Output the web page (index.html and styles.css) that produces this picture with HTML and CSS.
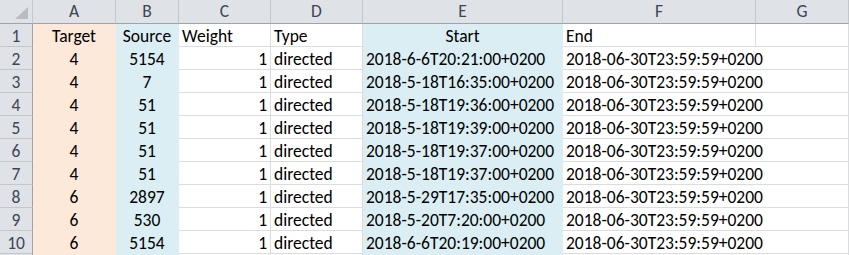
FILE: index.html
```html
<!DOCTYPE html>
<html>
<head>
<meta charset="utf-8">
<link rel="stylesheet" href="styles.css">
</head>
<body>
<div class="sheet">
  <div class="hd corner"><span class="tri"></span></div>
  <div class="hd">A</div>
  <div class="hd">B</div>
  <div class="hd">C</div>
  <div class="hd">D</div>
  <div class="hd">E</div>
  <div class="hd">F</div>
  <div class="hd">G</div>

  <div class="rn">1</div><div class="c a ctr">Target</div><div class="c b ctr">Source</div><div class="c">Weight</div><div class="c">Type</div><div class="c e ctr">Start</div><div class="c">End</div><div class="c"></div>
  <div class="rn">2</div><div class="c a ctr">4</div><div class="c b ctr">5154</div><div class="c rt">1</div><div class="c">directed</div><div class="c e">2018-6-6T20:21:00+0200</div><div class="c ov">2018-06-30T23:59:59+0200</div><div class="c"></div>
  <div class="rn">3</div><div class="c a ctr">4</div><div class="c b ctr">7</div><div class="c rt">1</div><div class="c">directed</div><div class="c e">2018-5-18T16:35:00+0200</div><div class="c ov">2018-06-30T23:59:59+0200</div><div class="c"></div>
  <div class="rn">4</div><div class="c a ctr">4</div><div class="c b ctr">51</div><div class="c rt">1</div><div class="c">directed</div><div class="c e">2018-5-18T19:36:00+0200</div><div class="c ov">2018-06-30T23:59:59+0200</div><div class="c"></div>
  <div class="rn">5</div><div class="c a ctr">4</div><div class="c b ctr">51</div><div class="c rt">1</div><div class="c">directed</div><div class="c e">2018-5-18T19:39:00+0200</div><div class="c ov">2018-06-30T23:59:59+0200</div><div class="c"></div>
  <div class="rn">6</div><div class="c a ctr">4</div><div class="c b ctr">51</div><div class="c rt">1</div><div class="c">directed</div><div class="c e">2018-5-18T19:37:00+0200</div><div class="c ov">2018-06-30T23:59:59+0200</div><div class="c"></div>
  <div class="rn">7</div><div class="c a ctr">4</div><div class="c b ctr">51</div><div class="c rt">1</div><div class="c">directed</div><div class="c e">2018-5-18T19:37:00+0200</div><div class="c ov">2018-06-30T23:59:59+0200</div><div class="c"></div>
  <div class="rn">8</div><div class="c a ctr">6</div><div class="c b ctr">2897</div><div class="c rt">1</div><div class="c">directed</div><div class="c e">2018-5-29T17:35:00+0200</div><div class="c ov">2018-06-30T23:59:59+0200</div><div class="c"></div>
  <div class="rn">9</div><div class="c a ctr">6</div><div class="c b ctr">530</div><div class="c rt">1</div><div class="c">directed</div><div class="c e">2018-5-20T7:20:00+0200</div><div class="c ov">2018-06-30T23:59:59+0200</div><div class="c"></div>
  <div class="rn">10</div><div class="c a ctr">6</div><div class="c b ctr">5154</div><div class="c rt">1</div><div class="c">directed</div><div class="c e">2018-6-6T20:19:00+0200</div><div class="c ov">2018-06-30T23:59:59+0200</div><div class="c"></div>
  <div class="rn"></div><div class="c a"></div><div class="c b"></div><div class="c"></div><div class="c"></div><div class="c e"></div><div class="c"></div><div class="c"></div>
</div>
</body>
</html>
```
FILE: styles.css
```css
html, body {
  margin: 0;
  padding: 0;
  background: #ffffff;
  overflow: hidden;
}
.sheet {
  display: grid;
  grid-template-columns: 33px 83px 63px 92px 92px 200px 193px 93px;
  grid-template-rows: 24px;
  grid-auto-rows: 23px;
  width: 849px;
  height: 255px;
  overflow: hidden;
  font-family: Carlito, Calibri, Lato, sans-serif;
  font-size: 17.5px;
  color: #000;
}
.hd, .rn, .c {
  box-sizing: border-box;
  min-width: 0;
  border-right: 1px solid #dadcdd;
  border-bottom: 1px solid #dadcdd;
  display: flex;
  align-items: flex-end;
  padding: 0 3px 1px 3px;
  white-space: nowrap;
  line-height: 18px;
}
.hd {
  background: #dfe3e8;
  border-right-color: #c3c7cc;
  border-bottom-color: #9ea4ab;
  justify-content: center;
  padding-bottom: 3px;
  color: #3c4655;
}
.corner {
  position: relative;
  border-right-color: #c3c7cc;
}
.tri {
  position: absolute;
  right: 4px;
  bottom: 4px;
  width: 0;
  height: 0;
  border-left: 13px solid transparent;
  border-bottom: 12px solid #b9bdc3;
}
.rn {
  background: #dfe3e8;
  border-right-color: #9ea4ab;
  border-bottom-color: #c3c7cc;
  justify-content: center;
  color: #3c4655;
}
.ctr { justify-content: center; }
.rt { justify-content: flex-end; }
.ov { border-right-color: transparent; }
.a {
  background: #fde9d9;
  border-color: #fde9d9;
}
.b, .e {
  background: #daeef3;
  border-color: #daeef3;
}
```
